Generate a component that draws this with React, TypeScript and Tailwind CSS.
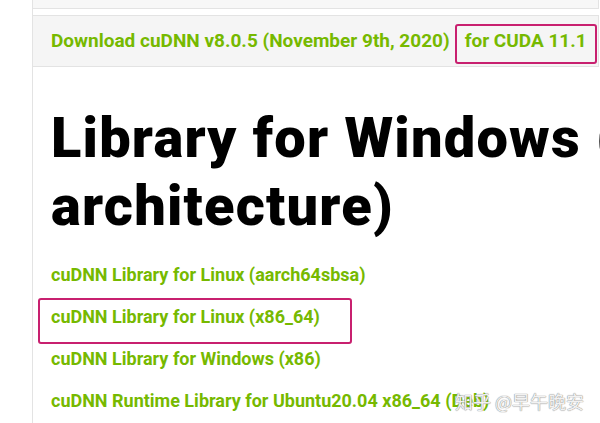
import React from "react";

const green = "text-[#76b900]";

export default function App() {
  const links = [
    "cuDNN Library for Linux (aarch64sbsa)",
    "cuDNN Library for Linux (x86_64)",
    "cuDNN Library for Windows (x86)",
    "cuDNN Runtime Library for Ubuntu20.04 x86_64 (Deb)",
  ];
  return (
    <div className="relative w-[600px] h-[423px] overflow-hidden bg-white" style={{ fontFamily: "Roboto, 'Liberation Sans', sans-serif" }}>
      <div className="ml-[32px] mr-[1px] h-full border-l border-[#e3e3e3]">
        <div className="h-[9px] bg-[#f7f7f7] border-b border-r border-[#e3e3e3]" />
        <div className="mt-[6px] h-[52px] bg-[#f5f5f5] border-y border-r border-[#e3e3e3] flex items-center pl-[18px]">
          <span className={`${green} text-[19px] font-bold whitespace-nowrap`}>
            Download cuDNN v8.0.5 (November 9th, 2020)
            <span className="relative ml-[15px]">
              for CUDA 11.1
              <span className="absolute -left-[10px] -right-[10px] -top-[5px] -bottom-[12px] border-2 border-[#c8206f] rounded-[3px]" />
            </span>
          </span>
        </div>
        <div className="pl-[18px] pt-[37px] text-[56px] font-black leading-[68px] text-black whitespace-nowrap tracking-[1.2px]">
          <div>Library for Windows (</div>
          <div>architecture)</div>
        </div>
        <div className="pl-[18px] pt-[24px] flex flex-col gap-[21px]">
          {links.map((l, i) => (
            <div key={i} className={`${green} text-[18px] font-bold leading-[21px] whitespace-nowrap`}>
              <span className="relative inline-block">
                {l}
                {i === 1 && (
                  <span className="absolute -left-[13px] -right-[32px] -top-[8px] -bottom-[17px] border-2 border-[#c8206f] rounded-[3px]" />
                )}
              </span>
            </div>
          ))}
        </div>
      </div>
      <div className="absolute left-[455px] top-[389px] text-[18px] leading-[24px] text-[#f2f2f2] whitespace-nowrap" style={{ fontFamily: "'Noto Sans CJK SC', sans-serif", textShadow: "0 0 1px #8a8a8a, 0 0 1px #8a8a8a" }}>
        知乎 @早午晚安
      </div>
    </div>
  );
}
